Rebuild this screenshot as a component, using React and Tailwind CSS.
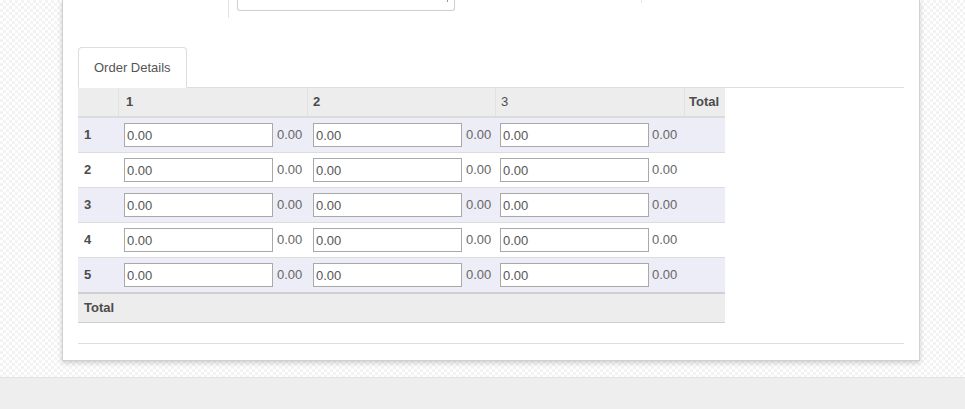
import React from 'react';

const cols = ['1', '2', '3'];
const rows = [1, 2, 3, 4, 5];

const Cell = ({ first }) => (
    <div className={`flex items-center ${first ? 'pl-[5px]' : 'pl-[6px]'}`}>
        <input
            readOnly
            value="0.00"
            className="w-[149px] h-[24px] border border-[#a9a9a9] bg-white px-[2px] text-[13px] text-[#555] outline-none"
        />
        <span className={`${first ? 'ml-[3px]' : 'ml-[4px]'} text-[#666]`}>0.00</span>
    </div>
);

const App = () => {
    return (
        <div
            className="w-[965px] h-[409px] overflow-hidden flex flex-col bg-[repeating-conic-gradient(#f3f3f3_0%_25%,#ffffff_0%_50%)] bg-[length:6px_6px]"
            style={{ fontFamily: '"Liberation Sans", Arial, sans-serif' }}
        >
            <div className="ml-[62px] w-[858px] h-[361px] bg-white border-x border-b border-[#d0d0d0] shadow-[0_2px_5px_rgba(0,0,0,0.18)] px-[15px] text-[13px] text-[#4c4c4c]">
                {/* bits of the form above */}
                <div className="flex items-start h-[19px] pl-[150px]">
                    <div className="w-px h-[18px] bg-[#e2e2e2]" />
                    <div className="ml-[8px] w-[218px] h-[11px] border border-t-0 border-[#cfcfcf] rounded-b-[3px] relative">
                        <div className="absolute right-[6px] top-0 w-px h-[2px] bg-[#999]" />
                    </div>
                    <div className="ml-[186px] w-px h-[3px] bg-[#e2e2e2]" />
                </div>

                {/* tabs */}
                <div className="mt-[28px] flex border-b border-[#ddd]">
                    <div className="-mb-px h-[41px] px-[15px] flex items-center border border-[#ddd] border-b-white rounded-t-[4px] bg-white text-[#555]">
                        Order Details
                    </div>
                </div>

                {/* matrix */}
                <div className="w-[647px]">
                    <div className="grid grid-cols-[40px_189px_188px_189px_41px] h-[30px] bg-[#ededed] border-b-2 border-[#dcdcdc] items-center font-bold">
                        <div className="h-full" />
                        {cols.map((c) => (
                            <div key={c} className={`h-full flex items-center border-l border-[#e2e2e2] ${c === '1' ? 'pl-[7px]' : 'pl-[5px]'} ${c === '3' ? 'font-normal' : ''}`}>
                                {c}
                            </div>
                        ))}
                        <div className="h-full flex items-center pl-[4px] border-l border-[#e2e2e2]">Total</div>
                    </div>
                    {rows.map((r) => (
                        <div
                            key={r}
                            className={`grid grid-cols-[40px_189px_188px_189px_41px] h-[35px] items-center border-b border-[#dcdcdc] ${r % 2 ? 'bg-[#ededf7]' : 'bg-white'}`}
                        >
                            <div className="pl-[6px] font-bold">{r}</div>
                            <Cell />
                            <Cell />
                            <Cell first />
                            <div />
                        </div>
                    ))}
                    <div className="h-[31px] bg-[#ededed] border-t-2 border-b border-[#d0d0d0] -mt-px flex items-center pl-[6px] font-bold">
                        Total
                    </div>
                </div>

                <div className="mt-[20px] border-b border-[#ddd]" />
            </div>
            <div className="mt-[16px] flex-1 bg-[#efeeee] border-t border-[#e2e2e2]" />
        </div>
    );
};

export default App;
